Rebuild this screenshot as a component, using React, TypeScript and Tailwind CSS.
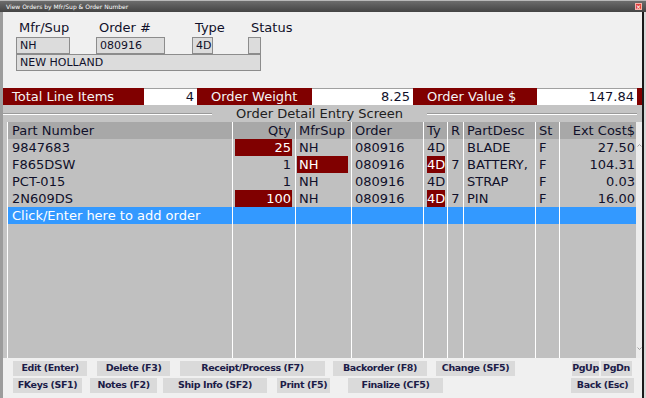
import React from 'react'

interface OrderLine {
  part: string
  qty: string
  qtyHi?: boolean
  mfr: string
  mfrHi?: boolean
  order: string
  ty: string
  tyHi?: boolean
  r: string
  desc: string
  st: string
  cost: string
}

const lines: OrderLine[] = [
  { part: '9847683', qty: '25', qtyHi: true, mfr: 'NH', order: '080916', ty: '4D', r: '', desc: 'BLADE', st: 'F', cost: '27.50' },
  { part: 'F865DSW', qty: '1', mfr: 'NH', mfrHi: true, order: '080916', ty: '4D', tyHi: true, r: '7', desc: 'BATTERY,', st: 'F', cost: '104.31' },
  { part: 'PCT-015', qty: '1', mfr: 'NH', order: '080916', ty: '4D', r: '', desc: 'STRAP', st: 'F', cost: '0.03' },
  { part: '2N609DS', qty: '100', qtyHi: true, mfr: 'NH', order: '080916', ty: '4D', tyHi: true, r: '7', desc: 'PIN', st: 'F', cost: '16.00' },
]

// column widths include the 1px white divider on the right
const colW = [
  'w-[225px] border-r border-white pl-[4px]',
  'w-[63px] border-r border-white',
  'w-[56px] border-r border-white',
  'w-[72px] border-r border-white pl-[3px]',
  'w-[24px] border-r border-white',
  'w-[16px] border-r border-white text-center',
  'w-[72px] border-r border-white pl-[3px]',
  'w-[24px] border-r border-white pl-[3px]',
  'w-[76px] text-right pr-[1px]',
]

const Btn = ({ label, className }: { label: string; className: string }) => (
  <div
    className={`h-[15px] bg-[#dadada] flex items-center justify-center text-[9.5px] tracking-[-0.4px] font-bold text-[#1c1c48] whitespace-nowrap ${className}`}
  >
    {label}
  </div>
)

const Field = ({ value, className }: { value: string; className: string }) => (
  <div
    className={`h-[17px] bg-[#dcdcdc] border border-[#8c8c8c] pl-[3px] text-[11px] leading-[15px] text-[#10102a] ${className}`}
  >
    {value}
  </div>
)

export default function App() {
  return (
    <div className="w-[646px] h-[398px] flex flex-col overflow-hidden bg-[#f0f0f0] font-['DejaVu_Sans',sans-serif] text-[#10102a]">
      {/* Title bar */}
      <div className="h-[12px] flex items-center border-t border-[#b8b8b8] bg-gradient-to-b from-[#6c6c6c] to-[#444] pl-[6px] pr-[4px]">
        <span className="text-[6px] leading-[6px] text-white whitespace-nowrap">View Orders by Mfr/Sup &amp; Order Number</span>
        <div className="ml-auto w-[7px] h-[7px] bg-[#e0403a] border border-[#f8b0a8] flex items-center justify-center text-[6px] leading-[6px] text-white font-bold">
          ×
        </div>
      </div>

      <div className="flex-1 flex min-h-0">
        {/* left frame */}
        <div className="w-[3px] bg-[#9c9c9c]" />

        <div className="w-[639px] flex flex-col min-h-0">
          {/* Header panel */}
          <div className="h-[76px] bg-[#f0f0f0] pl-[13px] pt-[8px]">
            <div className="flex">
              <div className="w-[54px]">
                <div className="text-[13px] leading-[16px] pl-[3px] mb-[1px] whitespace-nowrap">Mfr/Sup</div>
                <Field value="NH" className="w-[54px]" />
              </div>
              <div className="w-[69px] ml-[26px]">
                <div className="text-[13px] leading-[16px] pl-[3px] mb-[1px] whitespace-nowrap">Order #</div>
                <Field value="080916" className="w-[69px]" />
              </div>
              <div className="w-[21px] ml-[27px]">
                <div className="text-[13px] leading-[16px] pl-[3px] mb-[1px] whitespace-nowrap">Type</div>
                <Field value="4D" className="w-[21px]" />
              </div>
              <div className="w-[13px] ml-[35px]">
                <div className="text-[13px] leading-[16px] pl-[3px] mb-[1px] whitespace-nowrap">Status</div>
                <Field value="" className="w-[13px]" />
              </div>
            </div>
            <Field value="NEW HOLLAND" className="w-[245px]" />
          </div>

          {/* Totals bar */}
          <div className="h-[17px] flex bg-[#800000] text-[13px] leading-[17px]">
            <div className="w-[141px] pl-[9px] text-[#f4f4f4]">Total Line Items</div>
            <div className="w-[53px] bg-white border-t border-[#a0a0a0] text-right pr-[3px] leading-[16px]">4</div>
            <div className="w-[115px] pl-[14px] text-[#f4f4f4]">Order Weight</div>
            <div className="w-[101px] bg-white border-t border-[#a0a0a0] text-right pr-[3px] leading-[16px]">8.25</div>
            <div className="w-[124px] pl-[14px] text-[#f4f4f4]">Order Value $</div>
            <div className="w-[100px] bg-white border-t border-[#a0a0a0] text-right pr-[3px] leading-[16px]">147.84</div>
            <div className="flex-1" />
          </div>

          {/* Detail group */}
          <div className="flex-1 flex flex-col bg-[#c4c4c4] min-h-0">
            <div className="h-[17px] flex items-center">
              <div className="flex-1 h-[2px] border-t border-[#9a9a9a] border-b border-b-white" />
              <span className="mx-[24px] text-[13px] leading-[17px] text-[#202020] whitespace-nowrap">Order Detail Entry Screen</span>
              <div className="w-[210px] h-[2px] border-t border-[#9a9a9a] border-b border-b-white" />
              <div className="w-[5px]" />
            </div>

            <div className="flex-1 flex min-h-0">
              <div className="w-[4px]" />
              <div className="w-[629px] flex flex-col border-l border-white text-[13px] leading-[17px]">
                {/* column header */}
                <div className="h-[17px] flex bg-[#a8a8a8]">
                  <div className={colW[0]}>Part Number</div>
                  <div className={`${colW[1]} text-right pr-[4px]`}>Qty</div>
                  <div className={`${colW[2]} pl-[3px]`}>MfrSup</div>
                  <div className={colW[3]}>Order</div>
                  <div className={`${colW[4]} pl-[3px]`}>Ty</div>
                  <div className={colW[5]}>R</div>
                  <div className={colW[6]}>PartDesc</div>
                  <div className={colW[7]}>St</div>
                  <div className={colW[8]}>Ext Cost$</div>
                </div>

                {lines.map((l) => (
                  <div key={l.part} className="h-[17px] flex bg-[#c0c0c0]">
                    <div className={colW[0]}>{l.part}</div>
                    <div className={`${colW[1]} pl-[2px] pr-[3px]`}>
                      <div className={`h-full text-right pr-[1px] ${l.qtyHi ? 'bg-[#800000] text-white' : ''}`}>{l.qty}</div>
                    </div>
                    <div className={`${colW[2]} pl-[1px] pr-[3px]`}>
                      <div className={`h-full pl-[2px] ${l.mfrHi ? 'bg-[#800000] text-white' : ''}`}>{l.mfr}</div>
                    </div>
                    <div className={colW[3]}>{l.order}</div>
                    <div className={`${colW[4]} pl-[3px]`}>
                      <span className={`inline-block h-full ${l.tyHi ? 'bg-[#800000] text-white' : ''}`}>{l.ty}</span>
                    </div>
                    <div className={colW[5]}>{l.r}</div>
                    <div className={colW[6]}>{l.desc}</div>
                    <div className={colW[7]}>{l.st}</div>
                    <div className={colW[8]}>{l.cost}</div>
                  </div>
                ))}

                {/* add row */}
                <div className="h-[17px] flex bg-[#3399ff] text-white">
                  <div className={`${colW[0]} whitespace-nowrap`}>Click/Enter here to add order</div>
                  <div className={colW[1]} />
                  <div className={colW[2]} />
                  <div className={colW[3]} />
                  <div className={colW[4]} />
                  <div className={colW[5]} />
                  <div className={colW[6]} />
                  <div className={colW[7]} />
                  <div className={colW[8]} />
                </div>

                {/* empty space */}
                <div className="flex-1 flex bg-[#c0c0c0]">
                  {colW.map((c, i) => (
                    <div key={i} className={c} />
                  ))}
                </div>
              </div>

              {/* scroll strip */}
              <div className="w-[6px] bg-[#ececec] flex flex-col items-center pt-[22px] pb-[8px]">
                <svg width="5" height="3" viewBox="0 0 5 3">
                  <path d="M0.5 2.5 L2.5 0.5 L4.5 2.5" stroke="#8a8a8a" fill="none" strokeWidth="0.8" />
                </svg>
                <div className="flex-1" />
                <svg width="5" height="3" viewBox="0 0 5 3">
                  <path d="M0.5 0.5 L2.5 2.5 L4.5 0.5" stroke="#8a8a8a" fill="none" strokeWidth="0.8" />
                </svg>
              </div>
            </div>
          </div>

          {/* Function keys */}
          <div className="h-[40px] bg-[#f0f0f0] pt-[3px] pl-[10px] pr-[8px] flex flex-col gap-[2px]">
            <div className="flex">
              <Btn label="Edit (Enter)" className="w-[74px]" />
              <Btn label="Delete (F3)" className="w-[73px] ml-[10px]" />
              <Btn label="Receipt/Process (F7)" className="w-[145px] ml-[10px]" />
              <Btn label="Backorder (F8)" className="w-[94px] ml-[8px]" />
              <Btn label="Change (SF5)" className="w-[79px] ml-[9px]" />
              <Btn label="PgUp" className="w-[27px] ml-auto" />
              <Btn label="PgDn" className="w-[31px] ml-[2px] mr-[2px]" />
            </div>
            <div className="flex">
              <Btn label="FKeys (SF1)" className="w-[69px]" />
              <Btn label="Notes (F2)" className="w-[67px] ml-[8px]" />
              <Btn label="Ship Info (SF2)" className="w-[104px] ml-[6px]" />
              <Btn label="Print (F5)" className="w-[53px] ml-[10px]" />
              <Btn label="Finalize (CF5)" className="w-[95px] ml-[18px]" />
              <Btn label="Back (Esc)" className="w-[63px] ml-auto" />
            </div>
          </div>
        </div>

        {/* right frame */}
        <div className="w-[2px] bg-[#1a1a1a]" />
        <div className="w-[2px] bg-[#d8d8d8]" />
      </div>
    </div>
  )
}
